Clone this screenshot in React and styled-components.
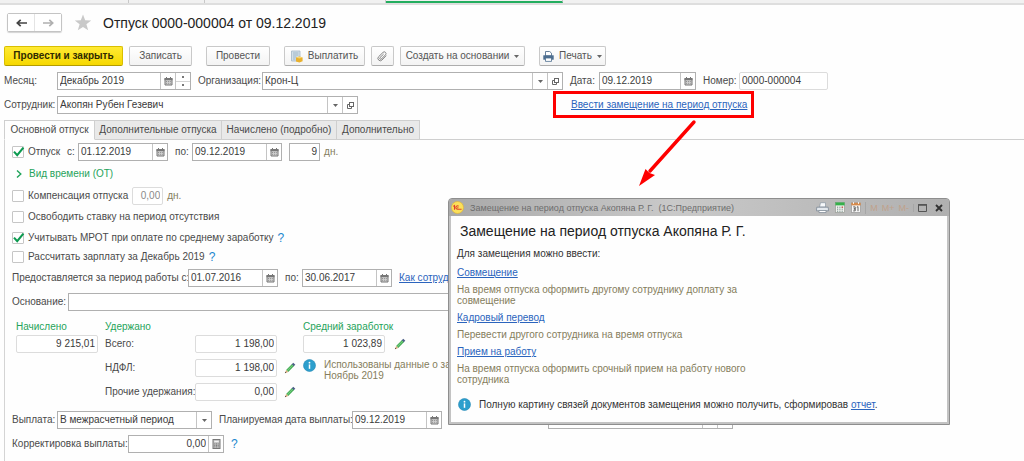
import React from "react";
import styled, { createGlobalStyle } from "styled-components";

const GlobalStyle = createGlobalStyle`
  * {
    box-sizing: border-box;
  }
  body {
    margin: 0;
    background: #fefefe;
    font-family: "Liberation Sans", Arial, sans-serif;
    font-size: 10px;
    line-height: 12px;
    color: #4a4a4a;
    overflow: hidden;
  }
  button,
  input,
  select {
    font: inherit;
    color: inherit;
    margin: 0;
    padding: 0;
  }
`;

/* icons */

const CalendarIcon = () => (
  <svg width="9" height="9" viewBox="0 0 9 9">
    <path d="M1 1.5h7v6.5H1z" fill="#d2d2d2" stroke="#777" />
    <path d="M.5 1h8v2.2h-8z" fill="#777" />
    <path d="M2.5 0v2M6.5 0v2" stroke="#777" />
    <path d="M2 4.5h5M2 6.3h5" stroke="#888" strokeWidth=".9" strokeDasharray="1 .9" />
  </svg>
);

const CalcIcon = () => (
  <svg width="9" height="10" viewBox="0 0 9 10">
    <rect x="1" y=".5" width="7" height="9" fill="#c2c2c2" stroke="#777" />
    <path d="M2.3 2.5h4.4" stroke="#f4f4f4" strokeWidth="1.2" />
    <path d="M2.3 4.9h4.4M2.3 6.4h4.4M2.3 7.9h4.4" stroke="#666" strokeWidth=".8" strokeDasharray="1 .7" />
  </svg>
);

const CaretIcon = () => (
  <svg width="5" height="3" viewBox="0 0 5 3">
    <path d="M0 0h5L2.5 3z" fill="#666" />
  </svg>
);

const OpenIcon = () => (
  <svg width="9" height="9" viewBox="0 0 9 9" fill="none" stroke="#666">
    <rect x="3.5" y="1.5" width="4" height="4" />
    <path d="M3.5 3.5h-2v4h4v-2" />
  </svg>
);

const PencilIcon = () => (
  <svg width="12" height="12" viewBox="0 0 12 12">
    <path d="M9.3.8l2 2-1.8 1.8-2-2z" fill="#4d5f87" />
    <path d="M7.8 2.2l2 2-5.6 5.7-2.1-2z" fill="#3fa651" />
    <path d="M8.4 2.8l.7.7-5.6 5.7-.7-.7z" fill="#74cf7d" />
    <path d="M2.1 7.9l2.1 2L1 11.2z" fill="#d8a878" />
    <path d="M1.5 9.8l.8.8-1.5.7z" fill="#333" />
  </svg>
);

const InfoIcon = () => (
  <svg width="13" height="13" viewBox="0 0 13 13">
    <circle cx="6.5" cy="6.5" r="6" fill="#2d9fcd" stroke="#2388b6" strokeWidth=".6" />
    <circle cx="6.5" cy="3.7" r=".9" fill="#fff" />
    <path d="M6.5 5.4v4.4" stroke="#fff" strokeWidth="1.5" />
  </svg>
);

const StarIcon = () => (
  <svg width="18" height="17" viewBox="0 0 18 17">
    <path d="M9 .5l2.2 5.8 6 .2-4.8 3.8 1.8 6L9 12.9l-5.2 3.4 1.8-6L.8 6.5l6-.2z" fill="#c9c9c9" />
  </svg>
);

const ArrowIcon = ({ right, color }) => (
  <svg width="11" height="8" viewBox="0 0 11 8" fill="none" stroke={color} strokeWidth="1.7">
    {right ? <path d="M0 4h9.5M6.3.8L9.7 4 6.3 7.2" /> : <path d="M11 4H1.5M4.7.8L1.3 4l3.4 3.2" />}
  </svg>
);

const CheckIcon = () => (
  <svg width="13" height="12" viewBox="0 0 13 12">
    <path d="M2 5.6l3.2 3.6L11.4 1.6" fill="none" stroke="#0c9a50" strokeWidth="2.1" />
  </svg>
);

const ChevronIcon = () => (
  <svg width="6" height="8" viewBox="0 0 6 8">
    <path d="M1 .5L4.8 4 1 7.5" fill="none" stroke="#1fa35a" strokeWidth="1.4" />
  </svg>
);

const PayIcon = () => (
  <svg width="12" height="13" viewBox="0 0 12 13">
    <path d="M.5 1h8.5v10H.5z" fill="#d3e0ea" stroke="#a3b6c6" strokeWidth=".8" />
    <path d="M2 3h5.5M2 5h5.5M2 7h3.5M2 9h2.5" stroke="#93acbf" strokeWidth=".8" />
    <path d="M5 7.6l3.4-1 3.2 1v3.6L8.4 12.6 5 11.4z" fill="#e9b02c" />
    <path d="M5 7.6l3.4 1 3.2-1-3.2-1z" fill="#f8d873" />
  </svg>
);

const ClipIcon = () => (
  <svg width="11" height="11" viewBox="0 0 11 11" fill="none" stroke="#858585" strokeWidth="1">
    <path d="M9.2 4.6L5 9a2.3 2.3 0 0 1-3.4-3.3L6 1.4a1.7 1.7 0 0 1 2.5 2.4L4.4 8a.9.9 0 0 1-1.4-1.4l3.6-3.5" />
  </svg>
);

const PrinterIcon = () => (
  <svg width="11" height="11" viewBox="0 0 11 11">
    <path d="M2.5.5h4.2L8.5 2.2V5h-6z" fill="#fff" stroke="#567391" strokeWidth=".9" />
    <path d="M.3 4.3h10.4v4.4H.3z" fill="#4d6e90" />
    <path d="M2.5 7h6v3.4h-6z" fill="#fff" stroke="#4d6e90" strokeWidth=".8" />
  </svg>
);

const LogoIcon = () => (
  <svg width="13" height="13" viewBox="0 0 13 13">
    <circle cx="6.5" cy="6.5" r="6" fill="#fbe05a" stroke="#e6b62c" strokeWidth=".6" />
    <path d="M2.3 5.4l1.2-.9v4.2M7.6 5.2a1.7 1.7 0 1 0-.8 3h3.8M6.2 6.7h1.2" fill="none" stroke="#e0402a" strokeWidth="1.1" />
  </svg>
);

const SysPrinterIcon = () => (
  <svg width="13" height="11" viewBox="0 0 13 11">
    <path d="M3.5 5L4.5.7h5L9.5 5z" fill="#f6f8fa" stroke="#8d98a5" strokeWidth=".7" />
    <path d="M.8 5.2h11.4l.4 3.6H.4z" fill="#e3e8ed" stroke="#7b8694" strokeWidth=".8" />
    <path d="M3 8.5h7v2H3z" fill="#fff" stroke="#7b8694" strokeWidth=".7" />
  </svg>
);

const SysCalcIcon = () => (
  <svg width="10" height="11" viewBox="0 0 10 11">
    <rect x=".5" y=".5" width="9" height="10" fill="#f1f1ee" stroke="#8b9089" strokeWidth=".6" />
    <path d="M.4.4h9.2v3H.4z" fill="#35b04a" />
    <path d="M2 5.2h6M2 7.2h6M2 9.2h6" stroke="#6d8a86" strokeDasharray="1.2 1.1" />
    <path d="M6.7 5.2h1.4" stroke="#d5493c" strokeWidth="1.2" />
  </svg>
);

const SysCalendarIcon = () => (
  <svg width="10" height="11" viewBox="0 0 10 11">
    <rect x=".5" y="1" width="9" height="9.5" fill="#f7f7f7" stroke="#8c8c8c" strokeWidth=".6" />
    <path d="M.3.8h9.4v2.6H.3z" fill="#d58a4c" />
    <path d="M2.5 0v2M7.5 0v2" stroke="#fff" strokeWidth=".8" />
    <path d="M2.2 4.9h2v2h-1.4 1.4v2h-2M5.8 5.3l1.2-.7v4.6" fill="none" stroke="#555" strokeWidth=".9" />
  </svg>
);

const MaximizeIcon = () => (
  <svg width="9" height="8" viewBox="0 0 9 8">
    <path d="M.5.5h8v7h-8z" fill="none" stroke="#555" />
    <path d="M0 1h9" stroke="#555" strokeWidth="1.6" />
  </svg>
);

const CloseIcon = () => (
  <svg width="8" height="8" viewBox="0 0 8 8">
    <path d="M1 1l6 6M7 1L1 7" stroke="#333" strokeWidth="1.9" />
  </svg>
);

/* layout */

const Page = styled.div`
  position: relative;
  min-height: 100vh;
`;

const WindowTabs = styled.div`
  display: flex;
  height: 5px;
  background: #f1f1f1;
  border-bottom: 2px solid #dedede;
`;

const WindowTab = styled.div`
  width: ${({ $w }) => $w}px;
  border-right: 1px solid #c8c8c8;
  border-bottom: ${({ $active }) => ($active ? "2px solid #23ae5f" : "0")};
`;

const Header = styled.header`
  display: flex;
  align-items: center;
  padding: 8px 7px 0;
  height: 27px;
`;

const NavButtons = styled.div`
  display: flex;
  width: 55px;
  height: 19px;
  border: 1px solid #c4c4c4;
  border-radius: 2px;
  box-shadow: 0 1px 1px #d4d4d4;
  margin-right: 12px;
`;

const NavButton = styled.button`
  flex: 1;
  display: flex;
  align-items: center;
  justify-content: center;
  border: 0;
  background: #fff;

  & + & {
    border-left: 1px solid #e4e4e4;
  }
`;

const StarButton = styled.button`
  display: flex;
  border: 0;
  background: none;
  margin-right: 11px;
`;

const Title = styled.h1`
  margin: 0;
  font-size: 14px;
  line-height: 18px;
  font-weight: normal;
  color: #222;
`;

const Toolbar = styled.div`
  display: flex;
  gap: 6px;
  padding: 14px 4px 0;
`;

const ToolButton = styled.button`
  display: flex;
  align-items: center;
  justify-content: center;
  gap: 5px;
  width: ${({ $w }) => $w}px;
  height: 20px;
  margin-right: ${({ $apart }) => ($apart ? 8 : 0)}px;
  border: 1px solid ${({ $main }) => ($main ? "#d9bf00" : "#c9c9c9")};
  border-bottom-color: ${({ $main }) => ($main ? "#b39c00" : "#adadad")};
  border-radius: 2px;
  background: ${({ $main }) => ($main ? "linear-gradient(#ffea33, #f6d800)" : "linear-gradient(#fff, #f3f3f3)")};
  font-weight: ${({ $main }) => ($main ? "bold" : "normal")};
  color: ${({ $main }) => ($main ? "#2f2b00" : "#555")};
  white-space: nowrap;
`;

const Form = styled.div`
  display: flex;
  flex-direction: column;
  gap: 6px;
  padding: 6px 4px;
`;

const Row = styled.div`
  display: flex;
  align-items: center;
  gap: ${({ $gap = 7 }) => $gap}px;
  height: ${({ $h = 18 }) => $h}px;
`;

const Pair = styled.div`
  display: flex;
  align-items: center;
`;

const Label = styled.label`
  flex: none;
  width: ${({ $w }) => ($w ? $w + "px" : "auto")};
  white-space: nowrap;
`;

const Field = styled.div`
  display: flex;
  flex: none;
  width: ${({ $w }) => $w}px;
  height: 18px;
  border: 1px solid ${({ $soft }) => ($soft ? "#dcdcdc" : "#b0b0b0")};
  border-radius: ${({ $soft }) => ($soft ? 2 : 0)}px;
  background: #fff;
`;

const Input = styled.input`
  flex: 1;
  min-width: 0;
  border: 0;
  outline: 0;
  padding: 0 2px;
  background: none;
  color: ${({ $dim }) => ($dim ? "#8a8a8a" : "#3a3a3a")};
  text-align: ${({ $right }) => ($right ? "right" : "left")};
`;

const Select = styled.select`
  flex: 1;
  min-width: 0;
  appearance: none;
  border: 0;
  outline: 0;
  padding: 0 2px;
  background: none;
  color: #3a3a3a;
`;

const FieldButton = styled.button`
  display: flex;
  align-items: center;
  justify-content: center;
  width: 15px;
  border: 0;
  border-left: 1px solid #c4c4c4;
  background: none;
`;

const SelectMark = styled.span`
  display: flex;
  align-items: center;
  justify-content: center;
  width: 15px;
  border-left: 1px solid #c4c4c4;
  pointer-events: none;
`;

const Spinner = styled.div`
  display: flex;
  flex-direction: column;
  width: 15px;
  border-left: 1px solid #c4c4c4;
`;

const SpinButton = styled.button`
  flex: 1;
  display: flex;
  align-items: center;
  justify-content: center;
  border: 0;
  background: none;

  & + & {
    border-top: 1px solid #d4d4d4;
  }
`;

const SpinDot = styled.i`
  width: 2px;
  height: 2px;
  background: #777;
`;

const Link = styled.a`
  color: #2b64bd;
  text-decoration: underline;
  white-space: nowrap;
`;

const Marked = styled.div`
  position: relative;
  margin-left: 206px;

  &::after {
    content: "";
    position: absolute;
    inset: -8px -7px -7px -18px;
    border: 3px solid #fe0000;
  }
`;

const Tabs = styled.div`
  display: flex;
  padding: 0 4px;
  height: 20px;
`;

const Tab = styled.button`
  width: ${({ $w }) => $w}px;
  border: 1px solid #cfcfcf;
  border-left-width: ${({ $active }) => ($active ? 1 : 0)}px;
  border-bottom-color: ${({ $active }) => ($active ? "#fefefe" : "#cfcfcf")};
  background: ${({ $active }) => ($active ? "#fefefe" : "#e9e9e9")};
  white-space: nowrap;
`;

const TabLine = styled.div`
  flex: 1;
  border-bottom: 1px solid #cfcfcf;
  margin-right: -4px;
`;

const Panel = styled.section`
  margin-left: 4px;
  padding: 3px 7px 9px;
  border-left: 1px solid #d4d4d4;
`;

const CheckLabel = styled.label`
  display: flex;
  align-items: center;
  gap: 4px;
  white-space: nowrap;
`;

const Box = styled.span`
  position: relative;
  display: flex;

  input {
    appearance: none;
    width: 12px;
    height: 12px;
    border: 1px solid #c6c6c6;
    border-radius: 1px;
    background: #fff;
  }
  svg {
    position: absolute;
    left: 0;
    top: 0;
    pointer-events: none;
  }
`;

const Help = styled.button`
  border: 0;
  background: none;
  font-size: 12px;
  color: #1c87cf;
`;

const Unit = styled.span`
  color: #857d5c;
`;

const Expander = styled.button`
  display: flex;
  align-items: center;
  gap: 7px;
  height: 26px;
  padding-left: 4px;
  border: 0;
  background: none;
  color: #1fa35a;
`;

const Totals = styled.div`
  display: grid;
  grid-template-columns: 82px 83px 82px 12px 1fr;
  column-gap: 7px;
  row-gap: 6px;
  padding: 5px 4px 10px;
`;

const Heading = styled.div`
  height: 12px;
  margin-bottom: -4px;
  color: #1fa35a;
  white-space: nowrap;
  grid-column: ${({ $span = 1 }) => "span " + $span};
`;

const Cell = styled.div`
  display: flex;
  align-items: center;
  gap: 9px;
  height: 18px;
`;

const IconButton = styled.button`
  display: flex;
  border: 0;
  background: none;
`;

const Note = styled.div`
  display: flex;
  gap: 8px;
  grid-row: span 2;
  line-height: 11px;
  color: #857d5c;
`;

const Author = styled.div`
  margin-left: 99px;
`;

const Pointer = styled.svg`
  position: absolute;
  left: 636px;
  top: 118px;
`;

/* dialog */

const Dialog = styled.div`
  position: absolute;
  left: 448px;
  top: 198px;
  width: 502px;
  border: 1px solid #8e8e8e;
  border-radius: 4px 4px 0 0;
  background: #c3c3c3;
  padding: 0 2px 2px;
`;

const DialogBar = styled.div`
  display: flex;
  align-items: center;
  height: 17px;
  margin: 0 -2px;
  padding: 0 2px;
  border-radius: 3px 3px 0 0;
  background: linear-gradient(90deg, #a9a9a9, #c9c9c9 45%, #b0b0b0);
  color: #6d6d6d;
`;

const DialogCaption = styled.span`
  flex: 1;
  padding-left: 6px;
  font-family: "Liberation Sans Narrow", "Liberation Sans", Arial, sans-serif;
  font-size: 9px;
  white-space: pre;
`;

const BarTools = styled.div`
  display: flex;
  align-items: center;
  gap: ${({ $gap }) => $gap}px;
  padding: 0 4px;

  & + & {
    border-left: 1px solid #a6a6a6;
  }
`;

const MemoryButton = styled.button`
  border: 0;
  background: none;
  font-size: 9px;
  color: #c0a28c;
`;

const DialogBody = styled.div`
  height: 206px;
  padding: 6px;
  background: #fefefe;
`;

const DialogTitle = styled.h2`
  margin: 0 3px 8px;
  font-size: 14px;
  line-height: 18px;
  font-weight: normal;
  color: #222;
`;

const Lead = styled.p`
  margin: 0 0 7px;
  color: #333;
`;

const Option = styled.div`
  width: 290px;
  margin-bottom: 6px;
`;

const OptionText = styled.p`
  margin: 5px 0 0;
  line-height: 11px;
  color: #857d5c;
`;

const Footnote = styled.div`
  display: flex;
  align-items: center;
  gap: 8px;
  margin-top: 13px;
  padding-left: 1px;
  color: #333;
`;

const DateField = ({ id, value, w }) => (
  <Field $w={w}>
    <Input id={id} defaultValue={value} />
    <FieldButton aria-label="Календарь"><CalendarIcon /></FieldButton>
  </Field>
);

const ComboField = ({ id, value, w, label }) => (
  <Field $w={w}>
    <Input id={id} defaultValue={value} aria-label={label} />
    <FieldButton aria-label="Выбрать"><CaretIcon /></FieldButton>
    <FieldButton aria-label="Открыть"><OpenIcon /></FieldButton>
  </Field>
);

const SumField = ({ id, value, label }) => (
  <Field $w={82} $soft>
    <Input id={id} defaultValue={value} aria-label={label} $right readOnly />
  </Field>
);

const Check = ({ checked, children }) => (
  <CheckLabel>
    <Box>
      <input type="checkbox" defaultChecked={checked} />
      {checked && <CheckIcon />}
    </Box>
    {children}
  </CheckLabel>
);

const Edit = () => <IconButton aria-label="Изменить"><PencilIcon /></IconButton>;

const options = [
  { name: "Совмещение", text: "На время отпуска оформить другому сотруднику доплату за совмещение" },
  { name: "Кадровый перевод", text: "Перевести другого сотрудника на время отпуска" },
  { name: "Прием на работу", text: "На время отпуска оформить срочный прием на работу нового сотрудника" },
];

const App = () => {
  return (
    <Page>
      <GlobalStyle />
      <WindowTabs>
        <WindowTab $w={129} />
        <WindowTab $w={76} />
        <WindowTab $w={181} />
        <WindowTab $w={177} $active />
      </WindowTabs>

      <Header>
        <NavButtons>
          <NavButton aria-label="Назад"><ArrowIcon color="#444" /></NavButton>
          <NavButton aria-label="Вперед"><ArrowIcon right color="#b0b0b0" /></NavButton>
        </NavButtons>
        <StarButton aria-label="В избранное"><StarIcon /></StarButton>
        <Title>Отпуск 0000-000004 от 09.12.2019</Title>
      </Header>

      <Toolbar>
        <ToolButton $w={119} $main>Провести и закрыть</ToolButton>
        <ToolButton $w={63} $apart>Записать</ToolButton>
        <ToolButton $w={64} $apart>Провести</ToolButton>
        <ToolButton $w={81}><PayIcon />Выплатить</ToolButton>
        <ToolButton $w={23} aria-label="Файлы"><ClipIcon /></ToolButton>
        <ToolButton $w={125} $apart>Создать на основании <CaretIcon /></ToolButton>
        <ToolButton $w={67}><PrinterIcon />Печать <CaretIcon /></ToolButton>
      </Toolbar>

      <Form>
        <Row>
          <Pair>
            <Label htmlFor="month" $w={53}>Месяц:</Label>
            <Field $w={134}>
              <Input id="month" defaultValue="Декабрь 2019" />
              <FieldButton aria-label="Календарь"><CalendarIcon /></FieldButton>
              <Spinner>
                <SpinButton aria-label="Больше"><SpinDot /></SpinButton>
                <SpinButton aria-label="Меньше"><SpinDot /></SpinButton>
              </Spinner>
            </Field>
          </Pair>
          <Pair>
            <Label htmlFor="org" $w={64}>Организация:</Label>
            <ComboField id="org" value="Крон-Ц" w={301} />
          </Pair>
          <Pair>
            <Label htmlFor="date" $w={29}>Дата:</Label>
            <DateField id="date" value="09.12.2019" w={97} />
          </Pair>
          <Pair>
            <Label htmlFor="number" $w={36}>Номер:</Label>
            <Field $w={89} $soft><Input id="number" defaultValue="0000-000004" /></Field>
          </Pair>
        </Row>
        <Row>
          <Pair>
            <Label htmlFor="person" $w={53}>Сотрудник:</Label>
            <ComboField id="person" value="Акопян Рубен Гезевич" w={301} />
          </Pair>
          <Marked><Link href="#replace">Ввести замещение на период отпуска</Link></Marked>
        </Row>
      </Form>

      <Tabs>
        <Tab $w={91} $active>Основной отпуск</Tab>
        <Tab $w={127}>Дополнительные отпуска</Tab>
        <Tab $w={115}>Начислено (подробно)</Tab>
        <Tab $w={83}>Дополнительно</Tab>
        <TabLine />
      </Tabs>

      <Panel>
        <Row>
          <Check checked>Отпуск</Check>
          <Pair>
            <Label htmlFor="from" $w={11}>с:</Label>
            <DateField id="from" value="01.12.2019" w={90} />
          </Pair>
          <Pair>
            <Label htmlFor="to" $w={17}>по:</Label>
            <DateField id="to" value="09.12.2019" w={90} />
          </Pair>
          <Row $gap={4}>
            <Field $w={31}><Input aria-label="Дней отпуска" defaultValue="9" $right /></Field>
            <Unit>дн.</Unit>
          </Row>
        </Row>
        <Expander><ChevronIcon />Вид времени (ОТ)</Expander>
        <Row $gap={4}>
          <Check>Компенсация отпуска</Check>
          <Field $w={31} $soft><Input aria-label="Дней компенсации" defaultValue="0,00" $right $dim /></Field>
          <Unit>дн.</Unit>
        </Row>
        <Row $h={24}><Check>Освободить ставку на период отсутствия</Check></Row>
        <Row $h={17} $gap={4}>
          <Check checked>Учитывать МРОТ при оплате по среднему заработку</Check>
          <Help>?</Help>
        </Row>
        <Row $h={22} $gap={4}>
          <Check>Рассчитать зарплату за Декабрь 2019</Check>
          <Help>?</Help>
        </Row>
        <Row $h={20}>
          <Pair>
            <Label htmlFor="workFrom" $w={176}>Предоставляется за период работы с:</Label>
            <DateField id="workFrom" value="01.07.2016" w={90} />
          </Pair>
          <Pair>
            <Label htmlFor="workTo" $w={17}>по:</Label>
            <DateField id="workTo" value="30.06.2017" w={90} />
          </Pair>
          <Link href="#usage">Как сотрудник</Link>
        </Row>
        <Row $h={28}>
          <Pair>
            <Label htmlFor="reason" $w={56}>Основание:</Label>
            <Field $w={664}><Input id="reason" /></Field>
          </Pair>
        </Row>

        <Totals>
          <Heading>Начислено</Heading>
          <Heading $span={3}>Удержано</Heading>
          <Heading>Средний заработок</Heading>

          <Cell><SumField value="9 215,01" label="Начислено" /></Cell>
          <Cell><Label htmlFor="total">Всего:</Label></Cell>
          <Cell><SumField id="total" value="1 198,00" /></Cell>
          <Cell />
          <Cell><SumField value="1 023,89" label="Средний заработок" /><Edit /></Cell>

          <Cell />
          <Cell><Label htmlFor="tax">НДФЛ:</Label></Cell>
          <Cell><SumField id="tax" value="1 198,00" /></Cell>
          <Cell><Edit /></Cell>
          <Note>
            <InfoIcon />
            <span>Использованы данные о заработке<br />Ноябрь 2019</span>
          </Note>

          <Cell />
          <Cell><Label htmlFor="other">Прочие удержания:</Label></Cell>
          <Cell><SumField id="other" value="0,00" /></Cell>
          <Cell><Edit /></Cell>
        </Totals>

        <Row>
          <Pair>
            <Label htmlFor="payout" $w={45}>Выплата:</Label>
            <Field $w={155}>
              <Select id="payout"><option>В межрасчетный период</option></Select>
              <SelectMark><CaretIcon /></SelectMark>
            </Field>
          </Pair>
          <Pair>
            <Label htmlFor="payDate" $w={133}>Планируемая дата выплаты:</Label>
            <DateField id="payDate" value="09.12.2019" w={90} />
          </Pair>
          <Author><ComboField label="Рассчитал" w={185} /></Author>
        </Row>
        <Row $h={30}>
          <Pair>
            <Label htmlFor="fix" $w={116}>Корректировка выплаты:</Label>
            <Field $w={96}>
              <Input id="fix" defaultValue="0,00" $right />
              <FieldButton aria-label="Калькулятор"><CalcIcon /></FieldButton>
            </Field>
          </Pair>
          <Help>?</Help>
        </Row>
      </Panel>

      <Pointer width="64" height="70" viewBox="0 0 64 70">
        <path d="M58 4L14 53" stroke="#fe0000" strokeWidth="3.4" strokeLinecap="round" />
        <path d="M3 68l6.5-17 4 4 5.5 2z" fill="#fe0000" />
      </Pointer>

      <Dialog role="dialog" aria-label="Замещение на период отпуска">
        <DialogBar>
          <LogoIcon />
          <DialogCaption>Замещение на период отпуска Акопяна Р. Г.  (1С:Предприятие)</DialogCaption>
          <BarTools $gap={6}>
            <SysPrinterIcon />
            <SysCalcIcon />
            <SysCalendarIcon />
          </BarTools>
          <BarTools $gap={4}>
            <MemoryButton>M</MemoryButton>
            <MemoryButton>M+</MemoryButton>
            <MemoryButton>M-</MemoryButton>
          </BarTools>
          <BarTools $gap={8}>
            <IconButton aria-label="Развернуть"><MaximizeIcon /></IconButton>
            <IconButton aria-label="Закрыть"><CloseIcon /></IconButton>
          </BarTools>
        </DialogBar>
        <DialogBody>
          <DialogTitle>Замещение на период отпуска Акопяна Р. Г.</DialogTitle>
          <Lead>Для замещения можно ввести:</Lead>
          {options.map((o) => (
            <Option key={o.name}>
              <Link href="#option">{o.name}</Link>
              <OptionText>{o.text}</OptionText>
            </Option>
          ))}
          <Footnote>
            <InfoIcon />
            <span>Полную картину связей документов замещения можно получить, сформировав <Link href="#report">отчет</Link>.</span>
          </Footnote>
        </DialogBody>
      </Dialog>
    </Page>
  );
};

export default App;
